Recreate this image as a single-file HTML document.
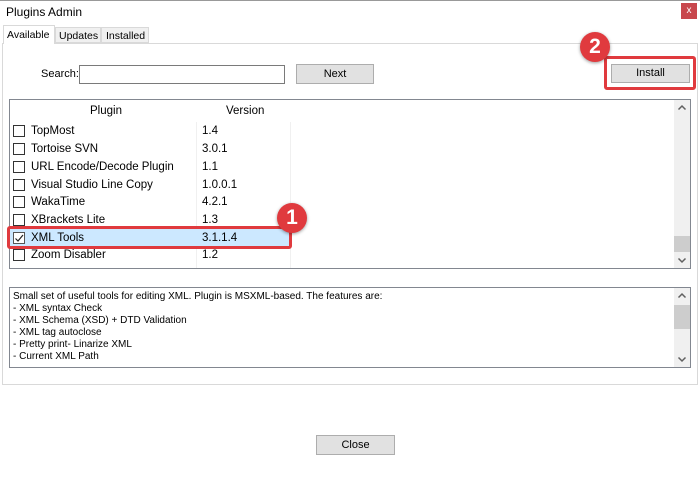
<!DOCTYPE html><html><head><style>
body{margin:0;width:700px;height:480px;background:#fff;position:relative;overflow:hidden;font-family:"Liberation Sans",sans-serif;font-size:11.5px;color:#000}
div{position:absolute;box-sizing:border-box}
.btn{background:#e1e1e1;border:1px solid #adadad;text-align:center;line-height:18px;font-size:11px}
.cb{width:12px;height:12px;border:1px solid #333;background:#fff;left:13px}
.t{left:31px}.v{left:202px}
.badge{width:30px;height:30px;border-radius:50%;background:#e03a3e;color:#fff;font-size:21px;font-weight:bold;text-align:center;line-height:30px;box-shadow:0 1px 3px rgba(0,0,0,.4)}
.sb{background:#f0f0f0}
svg{position:absolute}
</style></head><body>
<div style="left:0;top:0;width:700px;height:1px;background:#999"></div>
<div style="left:6px;top:5px;font-size:12px">Plugins Admin</div>
<div style="left:681px;top:3px;width:16px;height:16px;background:#c8474d;color:#fff;font-size:10px;text-align:center;line-height:15px">x</div>
<div style="left:2px;top:43px;width:696px;height:342px;border:1px solid #d9d9d9;background:#fff"></div>
<div style="left:3px;top:25px;width:52px;height:19px;border:1px solid #d9d9d9;border-bottom:none;background:#fff;padding:3px 0 0 3px;font-size:10.5px">Available</div>
<div style="left:55px;top:27px;width:46px;height:16px;border:1px solid #d9d9d9;background:#f0f0f0;padding:2px 0 0 3px;font-size:10.5px">Updates</div>
<div style="left:101px;top:27px;width:48px;height:16px;border:1px solid #d9d9d9;background:#f0f0f0;padding:2px 0 0 4px;font-size:10.5px">Installed</div>
<div style="left:41px;top:68px;font-size:11px">Search:</div>
<div style="left:79px;top:65px;width:206px;height:19px;border:1px solid #7a7a7a;background:#fff"></div>
<div class="btn" style="left:296px;top:64px;width:78px;height:20px">Next</div>
<div class="btn" style="left:611px;top:64px;width:79px;height:19px;line-height:17px">Install</div>
<div style="left:604px;top:56px;width:92px;height:34px;border:3px solid #e03a3e;border-radius:3px"></div>
<div class="badge" style="left:580px;top:32px">2</div>
<div style="left:9px;top:99px;width:682px;height:170px;border:1px solid #828790;background:#fff"></div>
<div style="left:90px;top:105px">Plugin</div>
<div style="left:226px;top:105px">Version</div>
<div style="left:196px;top:122px;width:1px;height:146px;background:#f0f0f0"></div>
<div style="left:290px;top:122px;width:1px;height:146px;background:#f0f0f0"></div>
<div style="left:10px;top:229px;width:279px;height:18px;background:#cce8ff"></div>
<div class="cb" style="top:125px"></div><div class="t" style="top:125px">TopMost</div><div class="v" style="top:125px">1.4</div>
<div class="cb" style="top:143px"></div><div class="t" style="top:143px">Tortoise SVN</div><div class="v" style="top:143px">3.0.1</div>
<div class="cb" style="top:161px"></div><div class="t" style="top:161px">URL Encode/Decode Plugin</div><div class="v" style="top:161px">1.1</div>
<div class="cb" style="top:179px"></div><div class="t" style="top:179px">Visual Studio Line Copy</div><div class="v" style="top:179px">1.0.0.1</div>
<div class="cb" style="top:196px"></div><div class="t" style="top:196px">WakaTime</div><div class="v" style="top:196px">4.2.1</div>
<div class="cb" style="top:214px"></div><div class="t" style="top:214px">XBrackets Lite</div><div class="v" style="top:214px">1.3</div>
<div class="cb" style="top:232px;border-color:#555"></div>
<svg style="left:13px;top:232px" width="12" height="12"><path d="M2.5 6.5 L5 9 L10 3" stroke="#222" stroke-width="1.2" fill="none"/></svg>
<div class="t" style="top:232px">XML Tools</div><div class="v" style="top:232px">3.1.1.4</div>
<div class="cb" style="top:249px"></div><div class="t" style="top:249px">Zoom Disabler</div><div class="v" style="top:249px">1.2</div>
<div style="left:7px;top:226px;width:285px;height:23px;border:3px solid #e03a3e;border-radius:3px"></div>
<div class="badge" style="left:277px;top:203px">1</div>
<div class="sb" style="left:674px;top:100px;width:16px;height:168px"></div>
<svg style="left:674px;top:100px" width="16" height="16"><path d="M4.5 9.5 L8 6 L11.5 9.5" stroke="#606060" stroke-width="1.5" fill="none"/></svg>
<div style="left:674px;top:236px;width:16px;height:16px;background:#cdcdcd"></div>
<svg style="left:674px;top:252px" width="16" height="16"><path d="M4.5 6.5 L8 10 L11.5 6.5" stroke="#606060" stroke-width="1.5" fill="none"/></svg>
<div style="left:9px;top:287px;width:682px;height:81px;border:1px solid #828790;background:#fff"></div>
<div style="left:13px;top:291px;font-size:10px;line-height:12px">Small set of useful tools for editing XML. Plugin is MSXML-based. The features are:<br>- XML syntax Check<br>- XML Schema (XSD) + DTD Validation<br>- XML tag autoclose<br>- Pretty print- Linarize XML<br>- Current XML Path</div>
<div class="sb" style="left:674px;top:288px;width:16px;height:79px"></div>
<svg style="left:674px;top:288px" width="16" height="16"><path d="M4.5 9.5 L8 6 L11.5 9.5" stroke="#606060" stroke-width="1.5" fill="none"/></svg>
<div style="left:674px;top:305px;width:16px;height:24px;background:#cdcdcd"></div>
<svg style="left:674px;top:351px" width="16" height="16"><path d="M4.5 6.5 L8 10 L11.5 6.5" stroke="#606060" stroke-width="1.5" fill="none"/></svg>
<div class="btn" style="left:316px;top:435px;width:79px;height:20px">Close</div>
</body></html>
